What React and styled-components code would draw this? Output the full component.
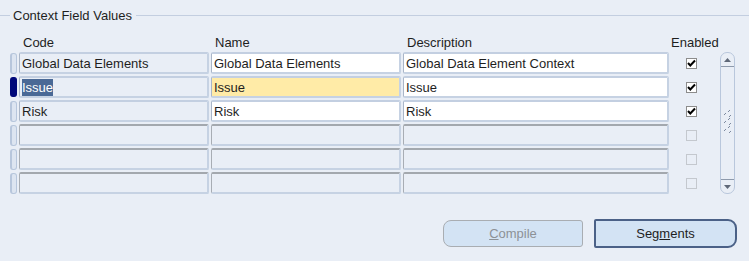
import React from "react";
import styled, { createGlobalStyle } from "styled-components";

const Global = createGlobalStyle`
  html, body { margin: 0; padding: 0; background: #e9eef6; }
  body { font-family: "Liberation Sans", Arial, sans-serif; font-size: 13px; color: #1e1e1e; }
`;

const Page = styled.div`
  width: 749px;
  height: 261px;
  background: #e9eef6;
  box-sizing: border-box;
  padding-top: 8px;
`;

const Legend = styled.div`
  display: flex;
  align-items: center;
  height: 15px;
  line-height: 15px;
`;

const Rule = styled.div`
  height: 1px;
  background: #c3cee0;
  width: ${(p) => (p.$grow ? "auto" : p.$w + "px")};
  flex: ${(p) => (p.$grow ? 1 : "none")};
`;

const LegendText = styled.span`
  padding: 0 4px 0 3px;
  color: #1e1e1e;
`;

const Body = styled.div`
  display: flex;
  padding-left: 10px;
  margin-top: 12px;
`;

const Table = styled.div`
  display: flex;
  flex-direction: column;
  gap: 2px;
`;

const Grid = styled.div`
  display: grid;
  grid-template-columns: 7px 190px 190px 266px 41px;
  column-gap: 2px;
  height: ${(p) => p.$h}px;
  align-items: center;
`;

const Header = styled.div`
  padding-left: ${(p) => p.$pad ?? 4}px;
  line-height: 15px;
  align-self: end;
  white-space: nowrap;
`;

const Indicator = styled.div`
  height: ${(p) => (p.$active ? 20 : 21)}px;
  box-sizing: border-box;
  border-radius: 3px;
  background: ${(p) => (p.$active ? "#00087a" : "#dde5f1")};
  border: 1px solid ${(p) => (p.$active ? "#00087a" : "#b7c6dc")};
  border-left-width: 2px;
`;

const Field = styled.div`
  height: 22px;
  box-sizing: border-box;
  border-radius: 2px;
  padding-left: 2px;
  display: flex;
  align-items: center;
  white-space: nowrap;
  overflow: hidden;
  background: ${(p) =>
    p.$kind === "white" ? "#ffffff" : p.$kind === "yellow" ? "#ffeba7" : "#e9eef6"};
  border: 1px solid #bac7db;
  border-width: 2px 2px 2px 1px;
  border-top-color: ${(p) => (p.$empty ? "#a3a8ae" : "#c3cfe1")};
  border-left-color: ${(p) => (p.$empty ? "#a8adb4" : "#aab6c8")};
  border-right-color: #c6d2e3;
  border-bottom-color: #c6d2e3;
`;

const Selected = styled.span`
  background: #4a6996;
  color: #ffffff;
  line-height: 17px;
`;

const CheckCell = styled.div`
  display: flex;
  justify-content: center;
`;

const Box = styled.div`
  width: 11px;
  height: 11px;
  box-sizing: border-box;
  border: 1px solid ${(p) => (p.$on ? "#8c8c8c" : "#c4c8ce")};
  background: ${(p) => (p.$on ? "#ffffff" : "transparent")};
  display: flex;
  align-items: center;
  justify-content: center;
`;

const Scroll = styled.div`
  margin-left: 8px;
  margin-top: 17px;
  width: 15px;
  height: 142px;
  box-sizing: border-box;
  border: 1px solid #b9c7dc;
  border-radius: 7px;
  display: flex;
  flex-direction: column;
  align-items: center;
`;

const Arrow = styled.div`
  width: 100%;
  height: 14px;
  display: flex;
  align-items: center;
  justify-content: center;
  border-${(p) => (p.$down ? "top" : "bottom")}: 1px solid #8e9aac;
  box-sizing: border-box;
`;

const Track = styled.div`
  flex: 1;
  display: flex;
  align-items: center;
  justify-content: center;
`;

const Buttons = styled.div`
  display: flex;
  gap: 11px;
  padding-left: 443px;
  margin-top: 25px;
  align-items: center;
`;

const Button = styled.div`
  box-sizing: border-box;
  display: flex;
  align-items: center;
  justify-content: center;
  background: #d3e3f4;
  width: ${(p) => (p.$primary ? 143 : 140)}px;
  height: ${(p) => (p.$primary ? 29 : 27)}px;
  border: ${(p) => (p.$primary ? "2px solid #4b6187" : "1px solid #a9adb2")};
  border-radius: ${(p) => (p.$primary ? "2px 9px 9px 2px" : "8px 3px 3px 8px")};
  color: ${(p) => (p.$primary ? "#1e1e1e" : "#8d9196")};
  font-size: 13px;
`;

const U = styled.span`
  text-decoration: underline;
`;

const Check = () => (
  <svg width="9" height="9" viewBox="0 0 9 9">
    <path d="M1 4 L3.3 6.5 L8 1.5" stroke="#000" strokeWidth="2" fill="none" />
  </svg>
);

const rows = [
  { code: "Global Data Elements", name: "Global Data Elements", desc: "Global Data Element Context", on: true },
  { code: "Issue", name: "Issue", desc: "Issue", on: true, active: true },
  { code: "Risk", name: "Risk", desc: "Risk", on: true },
  { empty: true },
  { empty: true },
  { empty: true },
];

export default function App() {
  return (
    <Page>
      <Global />
      <Legend>
        <Rule $w={10} />
        <LegendText>Context Field Values</LegendText>
        <Rule $grow />
      </Legend>
      <Body>
        <Table>
          <Grid $h={15}>
            <span />
            <Header>Code</Header>
            <Header>Name</Header>
            <Header>Description</Header>
            <Header $pad={0}>Enabled</Header>
          </Grid>
          {rows.map((r, i) => (
            <Grid key={i} $h={22}>
              <Indicator $active={r.active} />
              <Field $empty={r.empty}>
                {r.active ? <Selected>{r.code}</Selected> : r.code}
              </Field>
              <Field $empty={r.empty} $kind={r.empty ? "gray" : r.active ? "yellow" : "white"}>
                {r.name}
              </Field>
              <Field $empty={r.empty} $kind={r.empty ? "gray" : "white"}>
                {r.desc}
              </Field>
              <CheckCell>
                <Box $on={r.on}>{r.on && <Check />}</Box>
              </CheckCell>
            </Grid>
          ))}
        </Table>
        <Scroll>
          <Arrow>
            <svg width="7" height="4" viewBox="0 0 7 4">
              <path d="M0 4 L3.5 0 L7 4 Z" fill="#5f6878" />
            </svg>
          </Arrow>
          <Track>
            <svg width="8" height="26" viewBox="0 0 8 26">
              {[0, 8, 16].map((y) => (
                <g key={y} fill="#7d8aa0">
                  <rect x="5" y={y} width="1" height="1" />
                  <rect x="4" y={y + 1} width="1" height="1" />
                  <rect x="1" y={y + 3} width="1" height="1" />
                  <rect x="0" y={y + 4} width="1" height="1" />
                  <rect x="6" y={y + 5} width="1" height="1" />
                  <rect x="5" y={y + 6} width="1" height="1" />
                </g>
              ))}
            </svg>
          </Track>
          <Arrow $down>
            <svg width="7" height="4" viewBox="0 0 7 4">
              <path d="M0 0 L3.5 4 L7 0 Z" fill="#5f6878" />
            </svg>
          </Arrow>
        </Scroll>
      </Body>
      <Buttons>
        <Button>
          <span>
            <U>C</U>ompile
          </span>
        </Button>
        <Button $primary>
          <span>
            Seg<U>m</U>ents
          </span>
        </Button>
      </Buttons>
    </Page>
  );
}
